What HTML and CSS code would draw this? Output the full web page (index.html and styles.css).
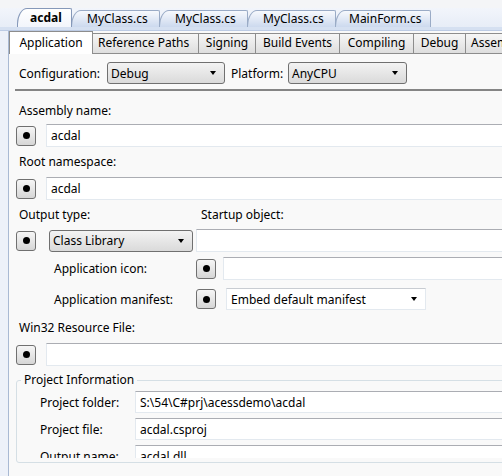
FILE: index.html
```html
<!DOCTYPE html>
<html>
<head>
<meta charset="utf-8">
<link rel="stylesheet" href="styles.css">
</head>
<body>
<div class="toolbar"></div>
<div class="doctabs">
  <div class="dtab active">acdal</div>
  <div class="dtab">MyClass.cs</div>
  <div class="dtab">MyClass.cs</div>
  <div class="dtab">MyClass.cs</div>
  <div class="dtab wide">MainForm.cs</div>
</div>
<div class="band"></div>
<div class="main">
  <div class="ptabs">
    <div class="ptab active">Application</div>
    <div class="ptab">Reference Paths</div>
    <div class="ptab">Signing</div>
    <div class="ptab">Build Events</div>
    <div class="ptab">Compiling</div>
    <div class="ptab">Debug</div>
    <div class="ptab">Assembly Information</div>
  </div>
  <div class="page">
    <div class="config">
      <span class="cfg-label">Configuration:</span>
      <div class="select sel-config"><span>Debug</span><i class="arrow"></i></div>
      <span class="plat-label">Platform:</span>
      <div class="select sel-plat"><span>AnyCPU</span><i class="arrow"></i></div>
    </div>
    <div class="sep"></div>

    <div class="label l1">Assembly name:</div>
    <div class="row r1"><div class="btn"></div><div class="tb">acdal</div></div>

    <div class="label l2">Root namespace:</div>
    <div class="row r2"><div class="btn"></div><div class="tb">acdal</div></div>

    <div class="label l3"><span class="out-label">Output type:</span><span>Startup object:</span></div>
    <div class="row r3">
      <div class="btn"></div>
      <div class="select sel-out"><span>Class Library</span><i class="arrow"></i></div>
      <div class="tb tb-startup"></div>
    </div>

    <div class="row sub r4">
      <span class="sub-label">Application icon:</span>
      <div class="btn"></div>
      <div class="tb tb-icon"></div>
    </div>
    <div class="row sub r5">
      <span class="sub-label">Application manifest:</span>
      <div class="btn"></div>
      <div class="flatsel"><span>Embed default manifest</span><i class="arrow"></i></div>
    </div>

    <div class="label l4">Win32 Resource File:</div>
    <div class="row r6"><div class="btn"></div><div class="tb"></div></div>

    <fieldset class="group">
      <legend>Project Information</legend>
      <div class="group-inner">
        <div class="grow"><span class="g-label">Project folder:</span><div class="tb gtb">S:\54\C#prj\acessdemo\acdal</div></div>
        <div class="grow"><span class="g-label">Project file:</span><div class="tb gtb">acdal.csproj</div></div>
        <div class="grow"><span class="g-label">Output name:</span><div class="tb gtb">acdal.dll</div></div>
      </div>
    </fieldset>
  </div>
</div>
</body>
</html>
```

FILE: styles.css
```css
html, body {
  margin: 0;
  padding: 0;
}
body {
  width: 502px;
  height: 476px;
  overflow: hidden;
  background: #edf1f9;
  font-family: "Noto Sans", "Liberation Sans", sans-serif;
  font-size: 12px;
  color: #000;
}
.toolbar {
  height: 8px;
  background: #f4f5f7;
}
.doctabs {
  height: 19px;
  display: flex;
  align-items: flex-end;
  padding-left: 17px;
  background: linear-gradient(#f2f5fb, #e7edf7);
}
.dtab {
  box-sizing: border-box;
  width: 89px;
  height: 17px;
  line-height: 15px;
  padding-left: 15px;
  margin-right: -1px;
  border: 1px solid #9aabc6;
  border-bottom: none;
  border-top-left-radius: 10px 16px;
  border-top-right-radius: 2px;
  background: linear-gradient(#f7f9fd, #ccd9ee);
  white-space: nowrap;
  flex-shrink: 0;
}
.dtab.wide {
  width: 96px;
  padding-left: 13px;
}
.dtab.active {
  width: 55px;
  height: 19px;
  line-height: 18px;
  padding-left: 12px;
  font-weight: bold;
  border-color: #8598b9;
  background: linear-gradient(#ffffff, #f2f5fb);
  position: relative;
  z-index: 1;
}
.band {
  height: 3px;
  background: #d5e0f1;
  border-bottom: 1px solid #bccbe4;
}
.main {
  margin-left: 8px;
  width: 640px;
  height: 445px;
  border-left: 1px solid #a9b9d3;
  background: #f9f9f9;
}
.ptabs {
  height: 22px;
  display: flex;
  align-items: flex-end;
  border-bottom: 1px solid #8d8d8d;
}
.ptab {
  box-sizing: border-box;
  height: 20px;
  line-height: 18px;
  text-align: center;
  border: 1px solid #8d8d8d;
  border-bottom: none;
  margin-right: -1px;
  background: linear-gradient(#f6f6f6, #dedede);
  white-space: nowrap;
  flex-shrink: 0;
  overflow: hidden;
}
.ptab.active {
  height: 23px;
  line-height: 21px;
  margin-bottom: -1px;
  background: #ffffff;
  position: relative;
  z-index: 1;
}
.ptab:nth-child(1) { width: 84px; }
.ptab:nth-child(2) { width: 107px; text-align: left; padding-left: 5px; }
.ptab:nth-child(3) { width: 58px; }
.ptab:nth-child(4) { width: 85px; }
.ptab:nth-child(5) { width: 75px; }
.ptab:nth-child(6) { width: 53px; }
.ptab:nth-child(7) { width: 150px; text-align: left; padding-left: 5px; }

.page {
  display: flex;
  flex-direction: column;
}
.config {
  margin-top: 8px;
  height: 22px;
  display: flex;
  align-items: center;
  padding-left: 10px;
}
.cfg-label {
  width: 88px;
}
.plat-label {
  width: 57px;
  margin-left: 6px;
}
.select {
  box-sizing: border-box;
  height: 22px;
  border: 1px solid #707070;
  border-radius: 3px;
  background: linear-gradient(#f3f3f3, #dadada);
  display: flex;
  align-items: center;
  justify-content: space-between;
  padding: 0 8px 0 3px;
  flex-shrink: 0;
}
.sel-config { width: 118px; }
.sel-plat { width: 119px; }
.arrow {
  width: 0;
  height: 0;
  border-top: 4px solid #000;
  border-left: 3.5px solid transparent;
  border-right: 3.5px solid transparent;
}
.sep {
  margin-top: 5px;
  margin-left: 6px;
  height: 2px;
  background: #858585;
}
.label {
  height: 16px;
  line-height: 16px;
  padding-left: 10px;
  display: flex;
}
.l1 { margin-top: 12px; }
.l2 { margin-top: 7px; }
.l3 { margin-top: 7px; }
.l4 { margin-top: 10px; }
.out-label { width: 182px; }

.row {
  height: 23px;
  display: flex;
  align-items: center;
  padding-left: 7px;
}
.r1 { margin-top: 5px; }
.r2 { margin-top: 7px; }
.r3 { margin-top: 6px; }
.r4 { margin-top: 5px; }
.r5 { margin-top: 8px; height: 22px; }
.r6 { margin-top: 7px; }

.btn {
  box-sizing: border-box;
  width: 20px;
  height: 20px;
  border: 1px solid #707070;
  border-radius: 3px;
  background: linear-gradient(#f6f6f6, #d6d6d6);
  display: flex;
  align-items: center;
  justify-content: center;
  flex-shrink: 0;
}
.btn::after {
  content: "";
  width: 7px;
  height: 7px;
  border-radius: 50%;
  background: #000;
}
.tb {
  box-sizing: border-box;
  flex: 1;
  height: 23px;
  line-height: 21px;
  margin-left: 10px;
  padding-left: 4px;
  background: #ffffff;
  border: 1px solid #e3e9ef;
  border-top-color: #abadb3;
  white-space: nowrap;
}
.sel-out {
  width: 144px;
  margin-left: 13px;
}
.tb-startup {
  margin-left: 3px;
}
.sub {
  padding-left: 45px;
}
.sub-label {
  width: 142px;
  flex-shrink: 0;
}
.tb-icon {
  margin-left: 7px;
}
.flatsel {
  box-sizing: border-box;
  width: 200px;
  height: 22px;
  margin-left: 10px;
  background: #ffffff;
  border: 1px solid #e3e9ef;
  border-top-color: #c8ccd2;
  display: flex;
  align-items: center;
  justify-content: space-between;
  padding: 0 8px 0 4px;
}

.group {
  margin: 6px 0 0 7px;
  padding: 0 0 4px 0;
  border: 1px solid #d5dfe5;
  border-radius: 3px;
  min-inline-size: 0;
}
.group legend {
  margin-left: 4px;
  padding: 0 3px;
  line-height: 16px;
}
.group-inner {
  height: 70px;
  overflow: hidden;
  padding-top: 3px;
  box-sizing: border-box;
}
.grow {
  height: 22px;
  display: flex;
  align-items: center;
  padding-left: 23px;
  margin-bottom: 5px;
}
.g-label {
  width: 95px;
  flex-shrink: 0;
}
.gtb {
  height: 22px;
  margin-left: 0;
}
```
